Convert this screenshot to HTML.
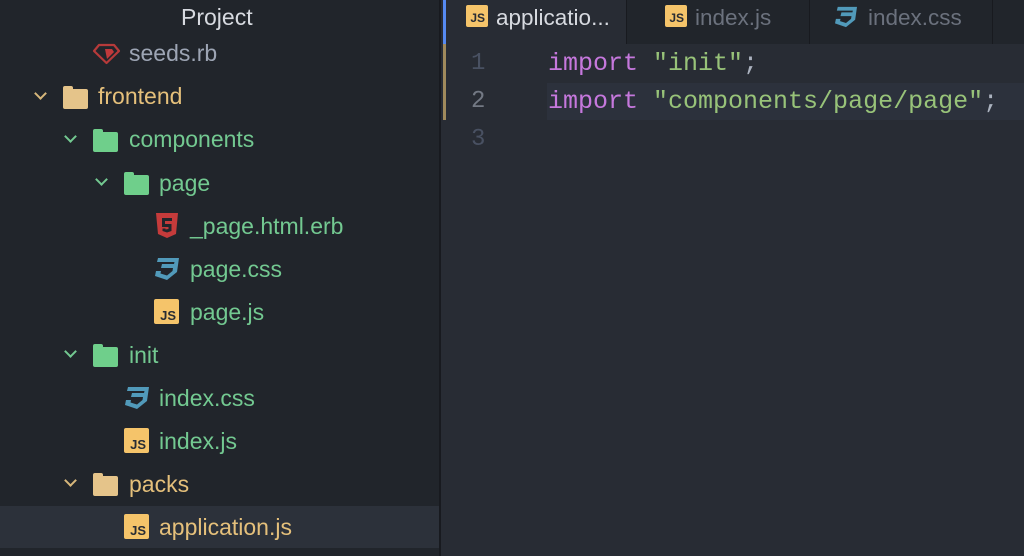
<!DOCTYPE html>
<html><head><meta charset="utf-8"><style>
*{margin:0;padding:0;box-sizing:border-box}
body{width:1024px;height:556px;overflow:hidden;background:#282c34;position:relative;font-family:"Liberation Sans",sans-serif}
#side{position:absolute;left:0;top:0;width:441px;height:556px;background:#21252b;border-right:2px solid #181a1f}
.t{position:absolute;font-size:23px;line-height:26px;white-space:nowrap}
.g{color:#73c991}.y{color:#e5c07b}.b{color:#9da5b4}
.chev{position:absolute;width:9px;height:9px;border-right:2px solid #d7b77b;border-bottom:2px solid #d7b77b;transform:rotate(45deg)}
.chev.gr{border-color:#73c991}
.fold{position:absolute;width:25px;height:20px;border-radius:2px}
.fold:before{content:"";position:absolute;left:0;top:-3px;width:10px;height:5px;border-radius:2px 2px 0 0;background:inherit}
.js{position:absolute;width:25px;height:25px;background:#f5c46a;border-radius:2px;color:#282c34;font:bold 13px "Liberation Sans",sans-serif;line-height:13px}
.js span{position:absolute;right:3px;bottom:2px}
#tabs{position:absolute;left:443px;top:0;width:581px;height:44px;background:#21252b}
.tab{position:absolute;top:0;height:44px;border-right:1px solid #181a1f}
.code{position:absolute;font-family:"Liberation Mono",monospace;font-size:25px;line-height:30px;white-space:pre}
.ln{position:absolute;left:471px;font-family:"Liberation Mono",monospace;font-size:24px;color:#495162}
.k{color:#c678dd}.s{color:#98c379}.p{color:#abb2bf}
</style></head><body>
<div id="side">
<div class="t" style="left:181px;top:4px;color:#d7dae0">Project</div>
<svg style="position:absolute;left:92px;top:43px" width="29" height="22" viewBox="0 0 29 22"><path d="M7 2H22L27 8L14.5 20L2 8Z" fill="none" stroke="#b63a3a" stroke-width="2.2" stroke-linejoin="round"/><path d="M13 6H20L22 9L15 16Z" fill="#c0393b"/></svg>
<div class="t b" style="left:129px;top:40px">seeds.rb</div>

<div class="chev" style="left:36px;top:89px"></div>
<div class="fold" style="left:63px;top:89px;background:#e5c48a"></div>
<div class="t y" style="left:98px;top:83px">frontend</div>

<div class="chev gr" style="left:66px;top:132px"></div>
<div class="fold" style="left:93px;top:132px;background:#6fcf8b"></div>
<div class="t g" style="left:129px;top:126px">components</div>

<div class="chev gr" style="left:97px;top:175px"></div>
<div class="fold" style="left:124px;top:175px;background:#6fcf8b"></div>
<div class="t g" style="left:159px;top:170px">page</div>

<svg style="position:absolute;left:156px;top:213px" width="22" height="25" viewBox="0 0 22 25"><path d="M0 0H22L20 21L11 25L2 21Z" fill="#c53b3b"/><path d="M6 5H16V8H9V11H15.5V18L11 19.5L6.5 18V15.5H9.5V16.5L12.5 16V14H6Z" fill="#21252b"/></svg>
<div class="t g" style="left:190px;top:213px">_page.html.erb</div>

<svg style="position:absolute;left:155px;top:258px" width="24" height="22" viewBox="0 0 24 22"><path d="M3 0H24L22 14L12 22L0 18L1 13H6L5.5 15.5L12 17.5L17.5 13L18 10H6L7 6H19L19.5 4H2Z" fill="#519aba"/></svg>
<div class="t g" style="left:190px;top:256px">page.css</div>

<div class="js" style="left:154px;top:299px"><span>JS</span></div>
<div class="t g" style="left:190px;top:299px">page.js</div>

<div class="chev gr" style="left:66px;top:347px"></div>
<div class="fold" style="left:93px;top:347px;background:#6fcf8b"></div>
<div class="t g" style="left:129px;top:342px">init</div>

<svg style="position:absolute;left:125px;top:387px" width="24" height="22" viewBox="0 0 24 22"><path d="M3 0H24L22 14L12 22L0 18L1 13H6L5.5 15.5L12 17.5L17.5 13L18 10H6L7 6H19L19.5 4H2Z" fill="#519aba"/></svg>
<div class="t g" style="left:159px;top:385px">index.css</div>

<div class="js" style="left:124px;top:428px"><span>JS</span></div>
<div class="t g" style="left:159px;top:428px">index.js</div>

<div class="chev" style="left:66px;top:476px"></div>
<div class="fold" style="left:93px;top:476px;background:#e5c48a"></div>
<div class="t y" style="left:129px;top:471px">packs</div>

<div style="position:absolute;left:0;top:506px;width:439px;height:42px;background:#2c313a"></div>
<div class="js" style="left:124px;top:514px"><span>JS</span></div>
<div class="t y" style="left:159px;top:514px">application.js</div>
</div>

<div id="tabs">
<div class="tab" style="left:0;width:183px;background:#282c34;border-right:none">
<div class="js" style="left:23px;top:5px;width:22px;height:22px"><span style="font-size:12px">JS</span></div>
<div class="t" style="left:53px;top:5px;color:#d7dae0;font-size:22.5px">applicatio...</div></div>
<div class="tab" style="left:183px;width:184px;border-left:1px solid #181a1f">
<div class="js" style="left:38px;top:5px;width:22px;height:22px"><span style="font-size:12px">JS</span></div>
<div class="t" style="left:68px;top:5px;color:#6b717d;font-size:22.5px">index.js</div></div>
<div class="tab" style="left:367px;width:183px">
<svg style="position:absolute;left:25px;top:6px" width="22" height="22" viewBox="0 0 24 22"><path d="M3 0H24L22 14L12 22L0 18L1 13H6L5.5 15.5L12 17.5L17.5 13L18 10H6L7 6H19L19.5 4H2Z" fill="#519aba"/></svg>
<div class="t" style="left:58px;top:5px;color:#6b717d;font-size:22.5px">index.css</div></div>
</div>
<div style="position:absolute;left:443px;top:0;width:3px;height:44px;background:#568af2"></div>
<div style="position:absolute;left:443px;top:44px;width:3px;height:76px;background:#a08a5c"></div>

<div style="position:absolute;left:547px;top:83px;width:477px;height:37px;background:#2c313c"></div>
<div class="ln" style="top:50px">1</div>
<div class="ln" style="top:88px;color:#737984">2</div>
<div class="ln" style="top:126px">3</div>
<div class="code" style="left:548px;top:49px"><span class="k">import</span> <span class="s">"init"</span><span class="p">;</span></div>
<div class="code" style="left:548px;top:87px"><span class="k">import</span> <span class="s">"components/page/page"</span><span class="p">;</span></div>
</body></html>
